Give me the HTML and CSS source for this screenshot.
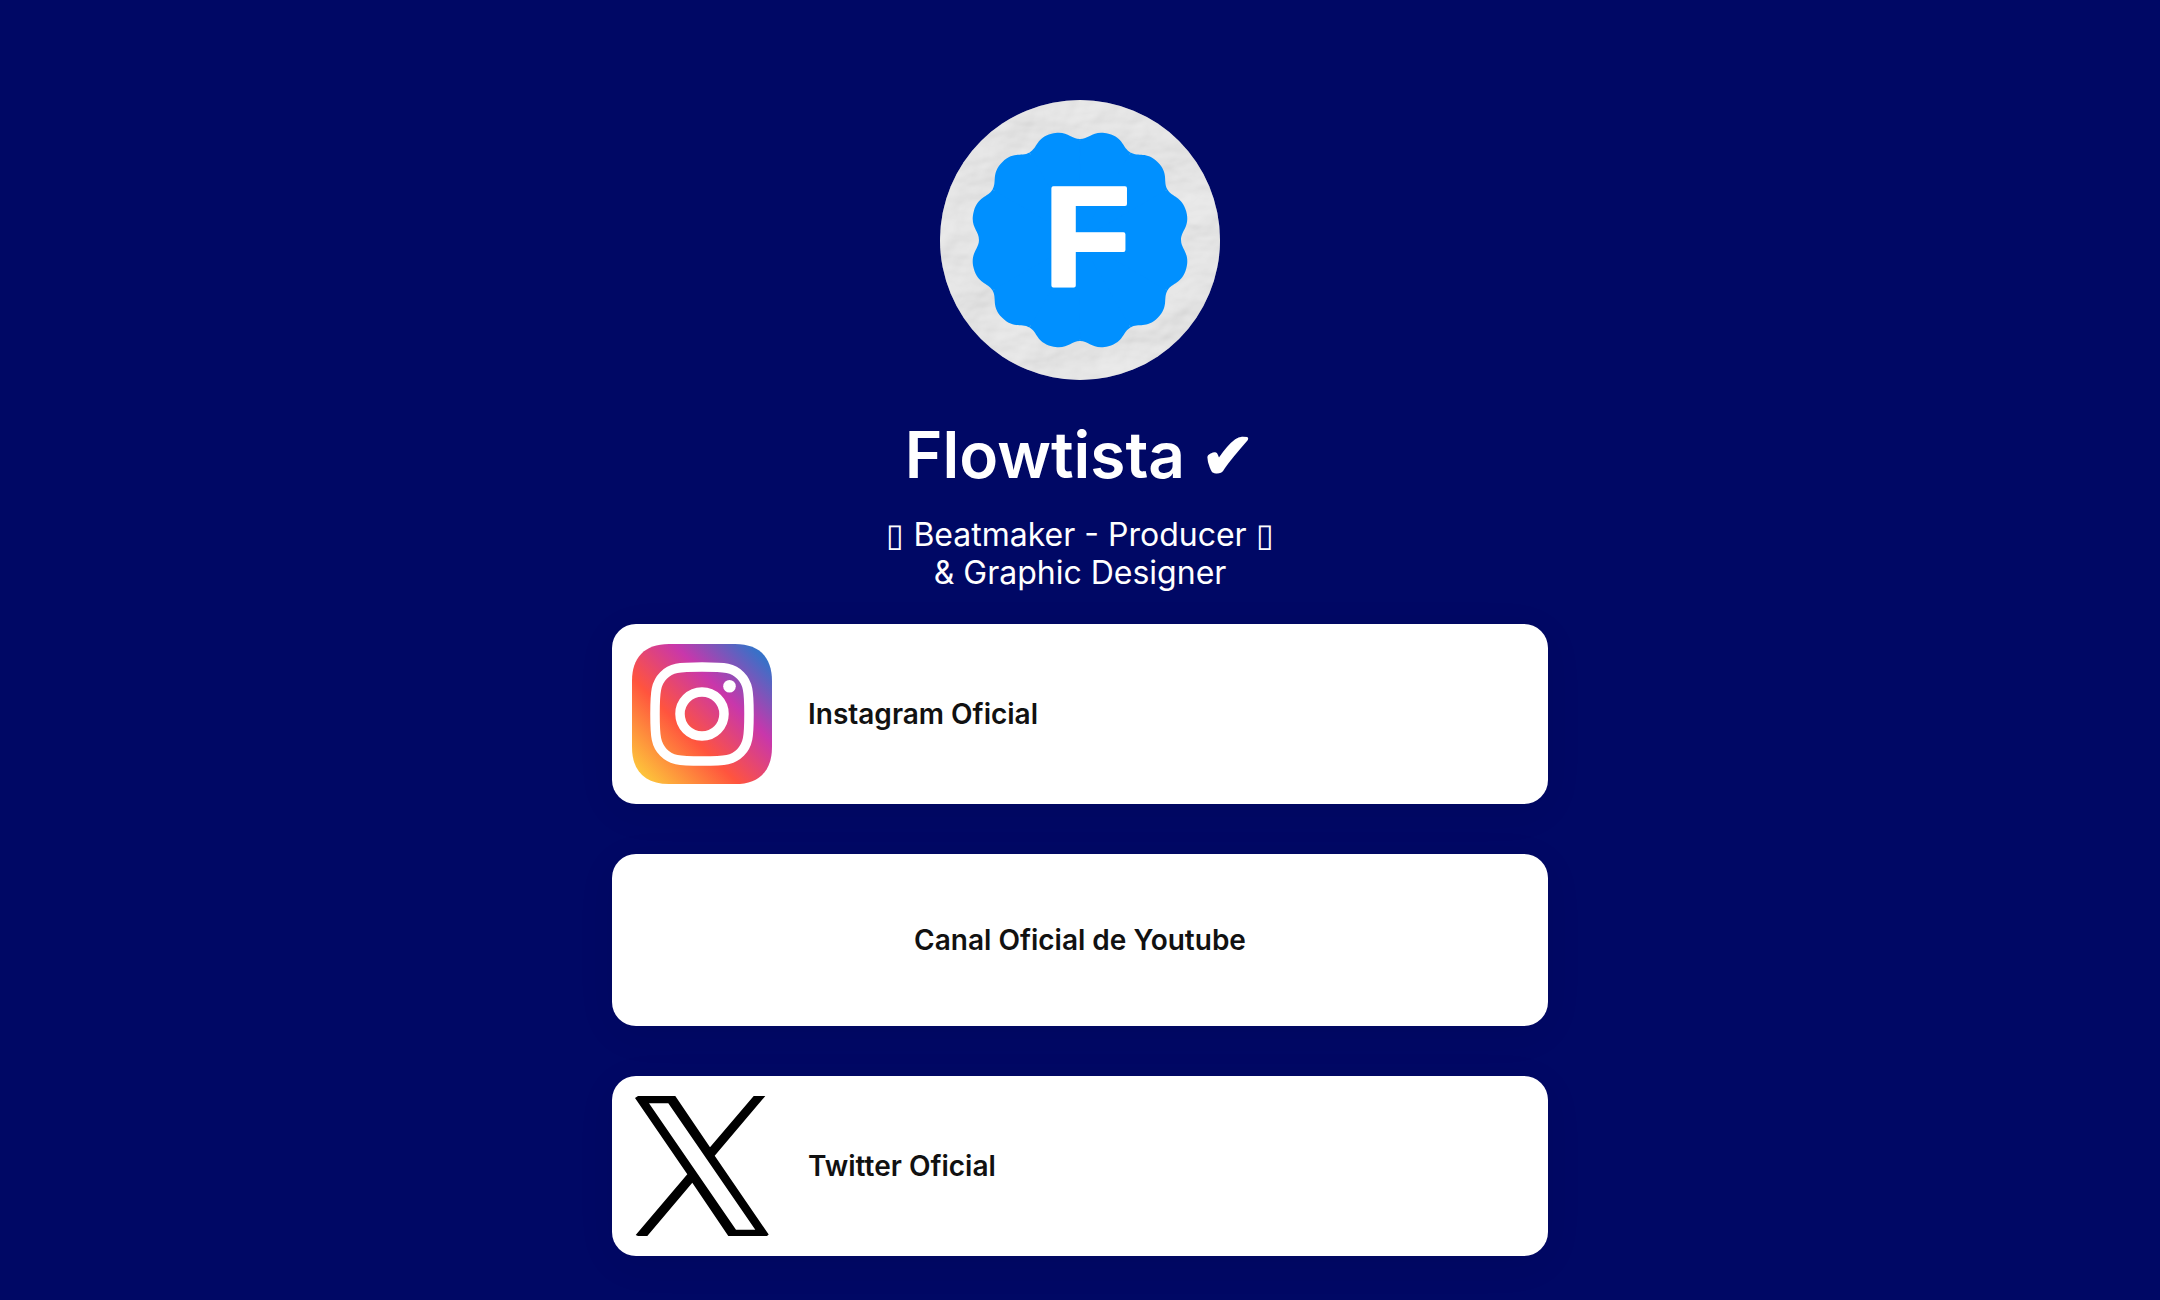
FILE: index.html
```
<!DOCTYPE html>
<html lang="es">
<head>
    <meta charset="UTF-8">
    <meta name="viewport" content="width=device-width, initial-scale=1.0">
    <title>Flowtista</title>
    <link rel="stylesheet" href="styles.css">
</head>
<body>
    <main class="container">
        <header class="profile">
            <svg class="avatar" viewBox="0 0 280 280" role="img" aria-label="Flowtista">
                <defs>
                    <filter id="paper" x="0" y="0" width="100%" height="100%" color-interpolation-filters="sRGB">
                        <feTurbulence type="fractalNoise" baseFrequency="0.012 0.018" numOctaves="4" seed="8"/>
                        <feDiffuseLighting surfaceScale="4" diffuseConstant="1" lighting-color="#f6f6f6">
                            <feDistantLight azimuth="230" elevation="68"/>
                        </feDiffuseLighting>
                    </filter>
                    <path id="lobe" d="M0 0L-26.1 -97.6C-17 -100 -16 -110 0 -110S17 -100 26.1 -97.6Z"/>
                </defs>
                <rect width="280" height="280" fill="#e5e5e5"/>
                <rect width="280" height="280" filter="url(#paper)" opacity="0.4"/>
                <g fill="#0090ff" transform="translate(140 140)">
                    <circle r="99"/>
                    <use href="#lobe" transform="rotate(15)"/>
                    <use href="#lobe" transform="rotate(45)"/>
                    <use href="#lobe" transform="rotate(75)"/>
                    <use href="#lobe" transform="rotate(105)"/>
                    <use href="#lobe" transform="rotate(135)"/>
                    <use href="#lobe" transform="rotate(165)"/>
                    <use href="#lobe" transform="rotate(195)"/>
                    <use href="#lobe" transform="rotate(225)"/>
                    <use href="#lobe" transform="rotate(255)"/>
                    <use href="#lobe" transform="rotate(285)"/>
                    <use href="#lobe" transform="rotate(315)"/>
                    <use href="#lobe" transform="rotate(345)"/>
                </g>
                <text class="avatar-letter" x="104" y="186">F</text>
            </svg>
            <h1>Flowtista ✔</h1>
            <p>▯ Beatmaker - Producer ▯<br>&amp; Graphic Designer</p>
        </header>

        <nav class="links">
            <a class="link" href="#instagram">
                <svg class="link-icon" viewBox="0 0 140 140" aria-hidden="true">
                    <defs>
                        <linearGradient id="insta" x1="0" y1="1" x2="1" y2="0">
                            <stop offset="0.07" stop-color="#fdc33b"/>
                            <stop offset="0.38" stop-color="#ff543e"/>
                            <stop offset="0.65" stop-color="#c837ab"/>
                            <stop offset="0.92" stop-color="#3771c8"/>
                        </linearGradient>
                    </defs>
                    <path fill="url(#insta)" d="M37 0H103C128 0 140 14 140 37V103C140 126 128 140 103 140H37C12 140 0 126 0 103V37C0 14 12 0 37 0Z"/>
                    <g fill="none" stroke="#fff" stroke-width="9.5">
                        <path d="M70 23C94 23 101 24 108.5 31.5C116 39 117 47 117 70C117 93 116 101 108.5 108.5C101 116 94 117 70 117C46 117 39 116 31.5 108.5C24 101 23 93 23 70C23 47 24 39 31.5 31.5C39 24 46 23 70 23Z"/>
                        <circle cx="70" cy="70" r="22"/>
                    </g>
                    <circle cx="97.5" cy="42.3" r="6.3" fill="#fff"/>
                </svg>
                <span>Instagram Oficial</span>
            </a>
            <a class="link link-plain" href="#youtube">
                <span>Canal Oficial de Youtube</span>
            </a>
            <a class="link" href="#twitter">
                <svg class="link-icon" viewBox="0 0 140 140" aria-hidden="true">
                    <path fill="#000" fill-rule="evenodd" d="M6 0H43.3L78 51.3L121.7 0H133.3L82.7 59.7L136.7 138.5L135 140H96.3L60.3 86.7L15.3 140H6L3.7 139L55.3 78.3L3 2ZM17 7.3L104 133.7H123.3L36.3 7.3Z"/>
                </svg>
                <span>Twitter Oficial</span>
            </a>
        </nav>
    </main>
</body>
</html>
```
FILE: styles.css
```
* {
    box-sizing: border-box;
}
body {
    margin: 0;
    background-color: #000865;
    color: #fff;
    font-family: Inter, sans-serif;
}
.container {
    max-width: 976px;
    margin: 0 auto;
    padding: 100px 20px 44px;
}
.profile {
    display: flex;
    flex-direction: column;
    align-items: center;
    text-align: center;
}
.avatar {
    width: 280px;
    height: 280px;
    border-radius: 50%;
}
.avatar-letter {
    fill: #fff;
    stroke: #fff;
    stroke-width: 4px;
    stroke-linejoin: round;
    font-family: "Liberation Sans", Arial, sans-serif;
    font-size: 141px;
    font-weight: 700;
}
h1 {
    margin: 36px 0 22px;
    font-size: 64px;
    font-weight: 600;
    line-height: 78px;
}
.profile p {
    margin: 0 0 32px;
    font-size: 32px;
    font-weight: 400;
    line-height: 38px;
}
.links {
    display: flex;
    flex-direction: column;
    gap: 50px;
}
.link {
    display: flex;
    align-items: center;
    gap: 36px;
    padding: 20px;
    border-radius: 24px;
    background-color: #fff;
    color: #111;
    font-size: 28px;
    font-weight: 600;
    text-decoration: none;
    box-shadow: 0 8px 40px rgba(0, 0, 0, 0.06);
}
.link-plain {
    justify-content: center;
    min-height: 172px;
}
.link-icon {
    width: 140px;
    height: 140px;
    flex-shrink: 0;
}
```
